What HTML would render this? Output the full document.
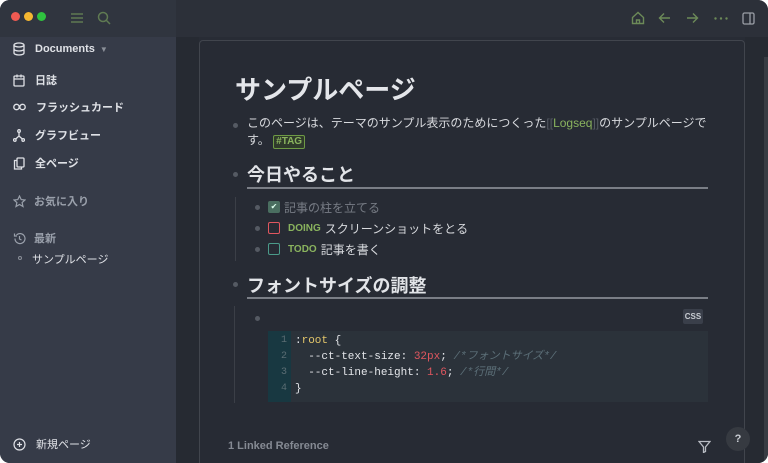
<!DOCTYPE html>
<html><head><meta charset="utf-8"><style>
*{margin:0;padding:0;box-sizing:border-box}
html,body{width:768px;height:463px;overflow:hidden;background:#fff}
body{font-family:"Liberation Sans","Noto Sans CJK JP",sans-serif;position:relative}
.win{position:absolute;left:0;top:0;width:768px;height:463px;border-radius:10px;overflow:hidden;background:#282c35}
.tb{position:absolute;left:0;top:0;width:768px;height:37px;background:#2c3039}
.tbl{position:absolute;left:0;top:0;width:176px;height:37px;background:#30353f}
.dot{position:absolute;top:12px;width:9px;height:9px;border-radius:50%}
.side{position:absolute;left:0;top:37px;width:176px;height:426px;background:#363b48}
.strip{position:absolute;left:176px;top:37px;width:23px;height:426px;background:#262a32}
.it{position:absolute;left:13px;color:#dfe1e6;font-size:11px;font-weight:bold;display:flex;align-items:center}
.it svg{margin-right:10px}
.dim{color:#9aa0ab}
.panel{position:absolute;left:199px;top:40px;width:546px;height:440px;border:1px solid #41454d;border-radius:4px;background:#272b34}
.rs{position:absolute;left:745px;top:37px;width:23px;height:426px;background:#262a32}
.sb{position:absolute;left:764px;top:57px;width:4px;height:406px;background:#383c43}
.t{position:absolute;color:#d8dade;white-space:nowrap}
.bul{position:absolute;width:5px;height:5px;border-radius:50%;background:#555a63}
.h{font-size:18px;font-weight:bold;color:#e2e4e8}
.hr{position:absolute;left:247px;width:461px;height:2px;background:#7a7e86}
.code{position:absolute;left:268px;top:331px;width:440px;height:71px;background:#2b323a}
.gut{position:absolute;left:268px;top:331px;width:23px;height:71px;background:#183841}
.ln{position:absolute;left:0;width:19px;text-align:right;font:10px/14px "Liberation Mono",monospace;color:#5b6d73}
.cl{position:absolute;left:295px;font:11px/14px "Liberation Mono","Noto Sans CJK JP",monospace;color:#e4e6ea;white-space:pre}
.row{position:absolute;left:268px;display:flex;align-items:center;font-size:12px;color:#d8dade;white-space:nowrap;height:16px}
.cb{width:12px;height:12px;border-radius:2px;margin-right:8px;flex:none}
</style></head><body><div class="win">
<div class="tb"></div><div class="tbl"></div>
<div class="dot" style="left:11px;background:#ee5a52"></div>
<div class="dot" style="left:24px;background:#f4b731"></div>
<div class="dot" style="left:37px;background:#2fc23f"></div>
<svg style="position:absolute;left:70px;top:12px" width="14" height="12" fill="none" stroke="#5f7a52" stroke-width="1.5"><path d="M1 2h12M1 6h12M1 10h12"/></svg>
<svg style="position:absolute;left:97px;top:11px" width="14" height="14" fill="none" stroke="#5f7a52" stroke-width="1.5"><circle cx="6" cy="6" r="4.5"/><path d="M9.5 9.5l3.5 3.5"/></svg>
<svg style="position:absolute;left:631px;top:11px" width="14" height="14" fill="none" stroke="#6c8a58" stroke-width="1.4"><path d="M1.5 6.5L7 1.5l5.5 5v6h-11z"/><path d="M5.5 12.5V9h3v3.5"/></svg>
<svg style="position:absolute;left:658px;top:12px" width="13" height="12" fill="none" stroke="#6c8a58" stroke-width="1.4"><path d="M12 6H1.5M6 1.5L1.5 6 6 10.5"/></svg>
<svg style="position:absolute;left:686px;top:12px" width="13" height="12" fill="none" stroke="#6c8a58" stroke-width="1.4"><path d="M1 6h10.5M7 1.5L11.5 6 7 10.5"/></svg>
<svg style="position:absolute;left:714px;top:17px" width="14" height="3" fill="#6c8a58"><circle cx="1.5" cy="1.5" r="1.2"/><circle cx="7" cy="1.5" r="1.2"/><circle cx="12.5" cy="1.5" r="1.2"/></svg>
<svg style="position:absolute;left:742px;top:12px" width="13" height="13" fill="none" stroke="#9a9ea6" stroke-width="1.3"><rect x="1" y="1" width="11" height="11" rx="1.5"/><path d="M8 1v11"/></svg>

<div class="side"></div>
<div class="it" style="top:42px"><svg width="12" height="14" fill="none" stroke="#dfe1e6" stroke-width="1.3"><ellipse cx="6" cy="3" rx="5" ry="2"/><path d="M1 3v8c0 1 2 2 5 2s5-1 5-2V3M1 7c0 1 2 2 5 2s5-1 5-2"/></svg>Documents <span style="color:#8a8f98;font-size:8px;margin-left:5px">▼</span></div>
<div class="it" style="top:72px"><svg width="12" height="13" fill="none" stroke="#dfe1e6" stroke-width="1.3"><rect x="1" y="2" width="10" height="10" rx="1"/><path d="M1 5h10M4 0.5v3M8 0.5v3"/></svg>日誌</div>
<div class="it" style="top:99px"><svg width="13" height="8" fill="none" stroke="#dfe1e6" stroke-width="1.4"><circle cx="3.5" cy="4" r="2.7"/><circle cx="9.5" cy="4" r="2.7"/></svg>フラッシュカード</div>
<div class="it" style="top:127px"><svg width="12" height="13" fill="none" stroke="#dfe1e6" stroke-width="1.3"><circle cx="6" cy="2" r="1.3"/><circle cx="1.8" cy="11" r="1.3"/><circle cx="10.2" cy="11" r="1.3"/><path d="M6 3.3V7L2.7 10M6 7l3.3 3"/></svg>グラフビュー</div>
<div class="it" style="top:155px"><svg width="12" height="13" fill="none" stroke="#dfe1e6" stroke-width="1.3"><rect x="4" y="1" width="7" height="9" rx="1"/><path d="M4 3.5H1.5v8.5h7V10"/></svg>全ページ</div>
<div class="it dim" style="top:193px;left:13px"><svg width="13" height="13" fill="none" stroke="#9aa0ab" stroke-width="1.2"><path d="M6.5 1l1.7 3.6 3.8.4-2.9 2.6.9 3.9-3.5-2-3.5 2 .9-3.9L1 5l3.8-.4z"/></svg><span style="margin-left:-2px">お気に入り</span></div>
<div class="it dim" style="top:230px"><svg width="13" height="13" fill="none" stroke="#9aa0ab" stroke-width="1.2"><path d="M2 6.5A5 5 0 1 0 3.5 3M1.5 1.5v2.5h2.5M6.5 4v3l2 1"/></svg><span style="margin-left:-2px">最新</span></div>
<div style="position:absolute;left:18px;top:256px;width:4px;height:4px;border:1px solid #8a8f98;border-radius:50%"></div>
<div class="it" style="top:251px;left:32px;font-weight:normal">サンプルページ</div>
<div class="it" style="top:436px"><svg width="13" height="13" fill="none" stroke="#dfe1e6" stroke-width="1.2"><circle cx="6.5" cy="6.5" r="5.5"/><path d="M6.5 4v5M4 6.5h5"/></svg><span style="font-weight:normal">新規ページ</span></div>

<div class="strip"></div><div class="rs"></div><div class="sb"></div>
<div class="panel"></div>

<div class="t" style="left:235px;top:70px;font-size:26px;font-weight:bold;color:#e4e6ea">サンプルページ</div>
<div class="bul" style="left:233px;top:123px"></div>
<div class="t" style="left:247px;top:115px;font-size:12px;line-height:17px">このページは、テーマのサンプル表示のためにつくった<span style="color:#555a63">[[</span><span style="color:#8ab35e">Logseq</span><span style="color:#555a63">]]</span>のサンプルページで<br>す。 <span style="display:inline-block;border:1px solid #6e9a45;color:#8ab35e;font-size:10px;font-weight:bold;padding:0 2px;border-radius:2px;line-height:12px;background:#2f3a2b">#TAG</span></div>
<div class="bul" style="left:233px;top:172px"></div>
<div class="t h" style="left:247px;top:161px">今日やること</div>
<div class="hr" style="top:187px"></div>
<div style="position:absolute;left:235px;top:197px;width:1px;height:64px;background:#3b3f47"></div>
<div class="bul" style="left:255px;top:205px"></div>
<div class="row" style="top:199px;color:#777c85"><div class="cb" style="background:#4a6e60;color:#dfe;font-size:8px;text-align:center;line-height:12px;margin-right:4px">✔</div>記事の柱を立てる</div>
<div class="bul" style="left:255px;top:226px"></div>
<div class="row" style="top:220px"><div class="cb" style="border:1.5px solid #e0565f"></div><b style="color:#8ab35e;font-size:10px;margin-right:4px">DOING</b>スクリーンショットをとる</div>
<div class="bul" style="left:255px;top:247px"></div>
<div class="row" style="top:241px"><div class="cb" style="border:1.5px solid #4b9b8a"></div><b style="color:#8ab35e;font-size:10px;margin-right:4px">TODO</b>記事を書く</div>
<div class="bul" style="left:233px;top:282px"></div>
<div class="t h" style="left:247px;top:272px">フォントサイズの調整</div>
<div class="hr" style="top:297px"></div>
<div style="position:absolute;left:234px;top:306px;width:1px;height:97px;background:#3b3f47"></div>
<div class="bul" style="left:255px;top:316px"></div>
<div style="position:absolute;left:683px;top:309px;width:20px;height:15px;background:#3a3f4a;color:#c8ccd2;font-size:8px;font-weight:bold;text-align:center;line-height:15px;border-radius:2px">CSS</div>
<div class="code"></div>
<div class="gut"><div class="ln" style="top:3px">1</div><div class="ln" style="top:19px">2</div><div class="ln" style="top:35px">3</div><div class="ln" style="top:51px">4</div></div>
<div class="cl" style="top:334px">:<span style="color:#e3c66a">root</span> {</div>
<div class="cl" style="top:350px">  --ct-text-size: <span style="color:#e0565f">32px</span>; <i style="color:#5c6f78">/*フォントサイズ*/</i></div>
<div class="cl" style="top:366px">  --ct-line-height: <span style="color:#e0565f">1.6</span>; <i style="color:#5c6f78">/*行間*/</i></div>
<div class="cl" style="top:382px">}</div>
<div class="t" style="left:228px;top:440px;font-size:11px;font-weight:bold;color:#858a93">1 Linked Reference</div>
<svg style="position:absolute;left:698px;top:440px" width="13" height="13" fill="none" stroke="#b8bcc3" stroke-width="1.3"><path d="M1 1.5h11L7.5 7v4.5l-2 1V7z"/></svg>
<div style="position:absolute;left:726px;top:427px;width:24px;height:24px;border-radius:50%;background:#363a41;color:#c8ccd2;font-size:11px;font-weight:bold;text-align:center;line-height:24px">?</div>
</div></body></html>
